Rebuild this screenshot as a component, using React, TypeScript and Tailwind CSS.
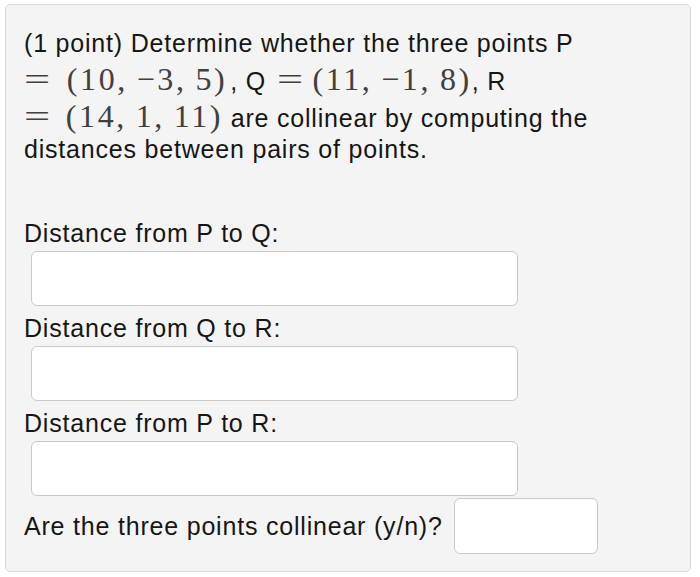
import type { ReactNode } from 'react';

function M({ children }: { children: ReactNode }) {
  return (
    <span className="font-['Liberation_Serif',serif] text-[32px] leading-none text-[#404040] tracking-[0.08em]">
      {children}
    </span>
  );
}

// TeX-style wide equals sign
function Eq() {
  return (
    <span className="inline-block font-['Liberation_Serif',serif] text-[32px] leading-none text-[#404040] scale-x-[1.45] origin-left mr-[9px]">
      =
    </span>
  );
}

function AnswerBox({ className = '' }: { className?: string }) {
  return (
    <input
      type="text"
      className={`block h-[55px] bg-white border-[1.5px] border-[#c9c9c9] rounded-[6px] outline-none ${className}`}
    />
  );
}

export default function App() {
  const labels = ['Distance from P to Q:', 'Distance from Q to R:', 'Distance from P to R:'];

  return (
    <div className="min-h-screen bg-white pl-[5px] pt-[4px] font-['Liberation_Sans',Arial,sans-serif] text-[25px] tracking-[0.8px] text-[#161616]">
      <div className="w-[686px] bg-[#f4f4f4] border border-[#dadada] rounded-[5px] pt-[23px] pl-[18px] pb-[17px]">
        {/* question text */}
        <div className="leading-[31px]">(1 point) Determine whether the three points P</div>
        <div className="leading-[37px] mt-[4px]">
          <Eq />
          <span className="ml-[15px]" />
          <M>(10,{'\u2009'}−3,{'\u2009'}5)</M>
          <span className="ml-[3px]">, Q</span>
          <span className="ml-[3px]" /> <Eq />
          <span className="ml-[8px]" />
          <M>(11,{'\u2009'}−1,{'\u2009'}8)</M>, R
        </div>
        <div className="leading-[31px]">
          <Eq />
          <span className="ml-[14px]" />
          <M>(14,{'\u2009'}1,{'\u2009'}11)</M> are collinear by computing the
        </div>
        <div className="leading-[31px]">distances between pairs of points.</div>

        <div className="mt-[53px]">
          {labels.map((label) => (
            <div key={label} className="mb-[7px]">
              <div className="leading-[31px]">{label}</div>
              <AnswerBox className="mt-[2px] ml-[7px] w-[487px]" />
            </div>
          ))}
          <div className="flex items-center mt-[-5px]">
            <span className="leading-[31px]">Are the three points collinear (y/n)?</span>
            <AnswerBox className="ml-[11px] w-[144px] h-[56px]" />
          </div>
        </div>
      </div>
    </div>
  );
}
